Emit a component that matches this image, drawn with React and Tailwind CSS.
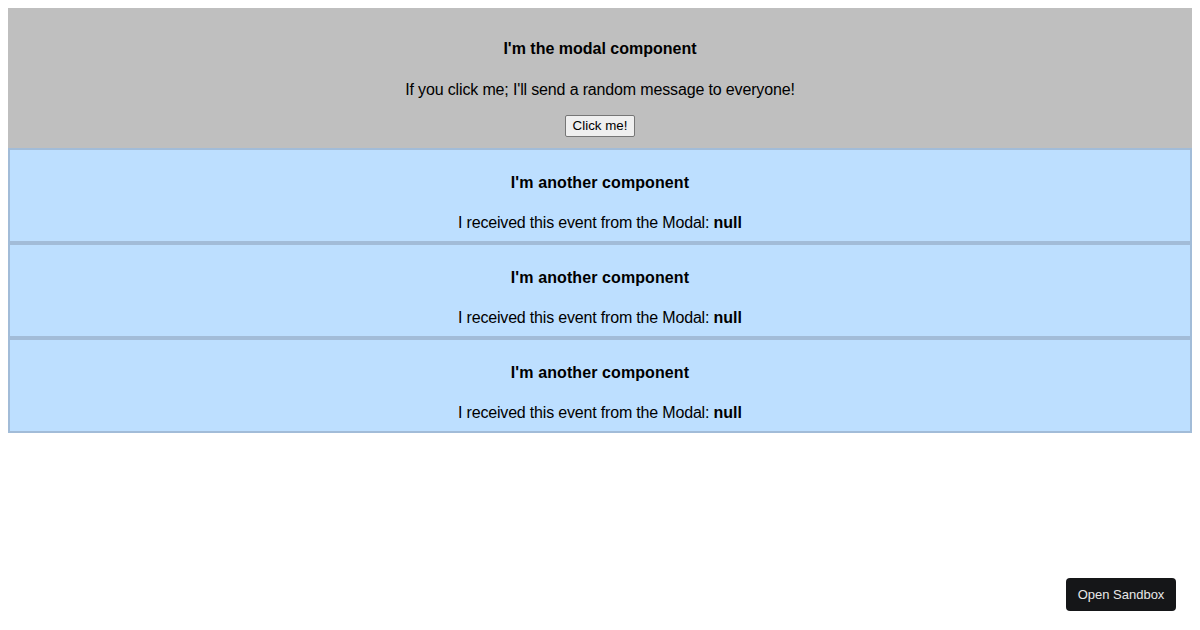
export default function App() {
  const listeners = [1, 2, 3];

  return (
    <div className="min-h-[630px] bg-white p-2 font-['Liberation_Sans',Arial,sans-serif] text-[16px] leading-[18px] text-black">
      <div className="flex flex-col items-center bg-[#bfbfbf] pt-[32px] pb-[11px]">
        <h4 className="font-bold">I'm the modal component</h4>
        <p className="mt-[23px] tracking-[-0.15px]">If you click me; I'll send a random message to everyone!</p>
        <button className="mt-[16px] h-[22px] rounded-[2px] border border-[#767676] bg-[#efefef] px-[7px] text-[13.33px] leading-[16px]">
          Click me!
        </button>
      </div>

      {listeners.map((n) => (
        <div
          key={n}
          className="flex h-[95px] flex-col items-center border-2 border-[#a2bcd8] bg-[#bddfff] pt-[24px]"
        >
          <h4 className="font-bold tracking-[0.1px]">I'm another component</h4>
          <p className="mt-[22px] tracking-[-0.18px]">
            I received this event from the Modal: <b className="tracking-normal">null</b>
          </p>
        </div>
      ))}

      <button className="fixed right-[24px] bottom-[19px] h-[33px] w-[110px] rounded-[4px] bg-[#151618] font-['Liberation_Sans',Arial,sans-serif] text-[13px] text-[#e8e8e8]">
        Open Sandbox
      </button>
    </div>
  );
}
